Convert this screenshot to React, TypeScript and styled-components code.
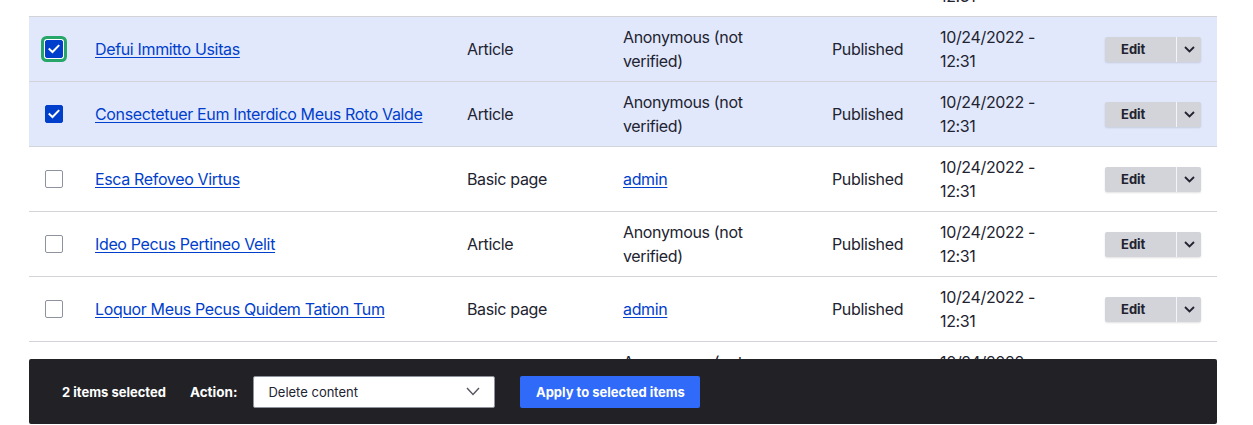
import React from "react";
import styled, { createGlobalStyle, css } from "styled-components";

const GlobalStyle = createGlobalStyle`
  html, body { margin: 0; padding: 0; background: #fff; }
  body { font-family: Inter, "Noto Sans", sans-serif; color: #222330; overflow: hidden; }
  * { box-sizing: border-box; }
`;

const Viewport = styled.div`
  position: relative;
  width: 1253px;
  height: 425px;
  overflow: hidden;
`;

const Table = styled.div`
  width: 1188px;
  margin: -48px 0 0 29px;
`;

const Row = styled.div<{ $selected?: boolean }>`
  display: grid;
  grid-template-columns: 50px 372px 156px 209px 108px 165px 128px;
  align-items: center;
  min-height: 65px;
  border-bottom: 1px solid #d3d4d9;
  background: ${(p) => (p.$selected ? "#e1e8fc" : "#fff")};
`;

const Cell = styled.div`
  padding: 8px 16px;
  font-size: 16px;
  line-height: 24px;
  letter-spacing: -0.35px;
  color: #222330;
`;

const CheckCell = styled.div`
  padding: 0 0 0 16px;
  display: flex;
  align-items: center;
`;

const Box = styled.span<{ $checked?: boolean; $focus?: boolean }>`
  width: 18px;
  height: 18px;
  border-radius: 2px;
  display: inline-flex;
  align-items: center;
  justify-content: center;
  ${(p) =>
    p.$checked
      ? css`
          background: #003ecc;
          border: 1px solid #003ecc;
        `
      : css`
          background: #fff;
          border: 1px solid #8e929c;
        `}
  ${(p) =>
    p.$focus &&
    css`
      box-shadow: 0 0 0 1px #fff, 0 0 0 4px #26a769;
    `}
`;

const Link = styled.a`
  color: #003ecc;
  text-decoration: underline;
  text-underline-offset: 2px;
  text-decoration-thickness: 1px;
  cursor: pointer;
`;

const OpsCell = styled.div`
  padding: 0 16px;
  display: flex;
`;

const DropButton = styled.div`
  display: flex;
  height: 25px;
  width: 96px;
  border-radius: 2px;
  background: #d3d4d9;
  box-shadow: 0 1px 2px rgba(0, 0, 0, 0.12);
  overflow: hidden;
`;

const DropMain = styled.span`
  flex: 1;
  display: flex;
  align-items: center;
  padding-left: 16px;
  font-size: 13px;
  font-weight: 700;
  color: #222330;
  border-right: 1px solid #f3f4f9;
`;

const DropToggle = styled.span`
  width: 24px;
  display: flex;
  align-items: center;
  justify-content: center;
`;

const Bar = styled.div`
  position: absolute;
  left: 29px;
  bottom: 1px;
  width: 1188px;
  height: 65px;
  background: #222226;
  border-radius: 2px;
  display: flex;
  align-items: center;
  padding: 0 0 0 33px;
  color: #fff;
  font-size: 13px;
  font-weight: 700;
`;

const Count = styled.span`
  margin-right: 24px;
`;

const ActionLabel = styled.span`
  font-size: 13.5px;
  margin-right: 16px;
`;

const Select = styled.div`
  width: 242px;
  height: 32px;
  background: #fff;
  border: 1px solid #8e929c;
  border-radius: 2px;
  display: flex;
  align-items: center;
  justify-content: space-between;
  padding: 0 14px 0 14px;
  color: #222330;
  font-size: 13px;
  font-weight: 400;
  margin-right: 25px;
`;

const PrimaryButton = styled.button`
  width: 180px;
  height: 32px;
  border: none;
  border-radius: 2px;
  background: #2f6af9;
  color: #fff;
  font-family: inherit;
  font-size: 13px;
  font-weight: 700;
  padding: 0;
`;

const Check = () => (
  <svg width="12" height="10" viewBox="0 0 12 10">
    <path d="M1.5 5.2 L4.5 8 L10.5 1.8" fill="none" stroke="#fff" strokeWidth="2" strokeLinecap="square" />
  </svg>
);

const Chevron = () => (
  <svg width="11" height="7" viewBox="0 0 11 7">
    <path d="M1 1 L5.5 5.5 L10 1" fill="none" stroke="#222330" strokeWidth="1.8" />
  </svg>
);

const SelectChevron = () => (
  <svg width="14" height="9" viewBox="0 0 14 9">
    <path d="M1 1 L7 7.5 L13 1" fill="none" stroke="#545560" strokeWidth="1.4" />
  </svg>
);

type Item = {
  title: string;
  type: string;
  author: string;
  admin: boolean;
  checked?: boolean;
  focus?: boolean;
};

const items: Item[] = [
  { title: "Nutus Pneum Tamen", type: "Basic page", author: "admin", admin: true },
  { title: "Defui Immitto Usitas", type: "Article", author: "Anonymous (not verified)", admin: false, checked: true, focus: true },
  { title: "Consectetuer Eum Interdico Meus Roto Valde", type: "Article", author: "Anonymous (not verified)", admin: false, checked: true },
  { title: "Esca Refoveo Virtus", type: "Basic page", author: "admin", admin: true },
  { title: "Ideo Pecus Pertineo Velit", type: "Article", author: "Anonymous (not verified)", admin: false },
  { title: "Loquor Meus Pecus Quidem Tation Tum", type: "Basic page", author: "admin", admin: true },
  { title: "Abigo Causa Dolus", type: "Article", author: "Anonymous (not verified)", admin: false },
];

export default function App() {
  return (
    <>
      <GlobalStyle />
      <Viewport>
        <Table>
          {items.map((it, i) => (
            <Row key={i} $selected={it.checked}>
              <CheckCell>
                <Box $checked={it.checked} $focus={it.focus}>
                  {it.checked && <Check />}
                </Box>
              </CheckCell>
              <Cell>
                <Link>{it.title}</Link>
              </Cell>
              <Cell>{it.type}</Cell>
              <Cell>{it.admin ? <Link>{it.author}</Link> : it.author}</Cell>
              <Cell>Published</Cell>
              <Cell>10/24/2022 - 12:31</Cell>
              <OpsCell>
                <DropButton>
                  <DropMain>Edit</DropMain>
                  <DropToggle>
                    <Chevron />
                  </DropToggle>
                </DropButton>
              </OpsCell>
            </Row>
          ))}
        </Table>
        <Bar>
          <Count>2 items selected</Count>
          <ActionLabel>Action:</ActionLabel>
          <Select>
            <span>Delete content</span>
            <SelectChevron />
          </Select>
          <PrimaryButton>Apply to selected items</PrimaryButton>
        </Bar>
      </Viewport>
    </>
  );
}
